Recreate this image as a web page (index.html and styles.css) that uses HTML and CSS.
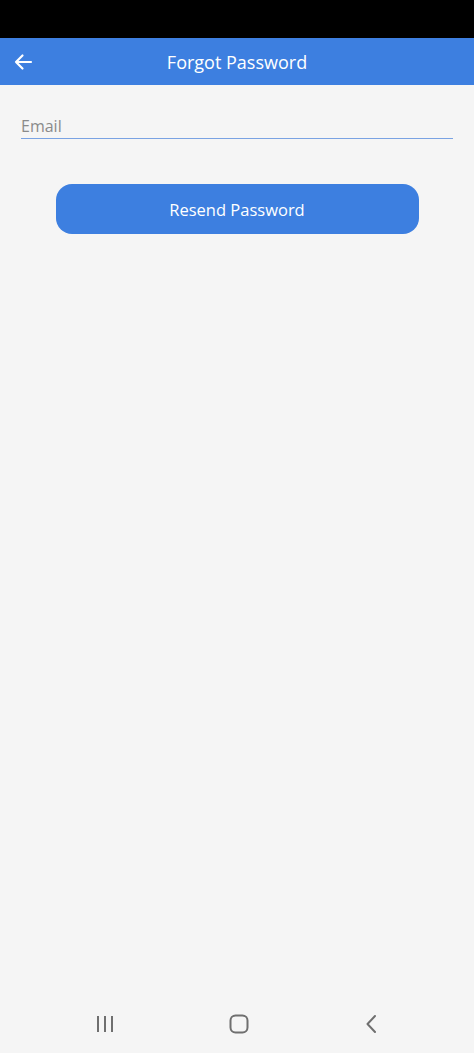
FILE: index.html
```html
<!DOCTYPE html>
<html lang="en">
<head>
  <meta charset="UTF-8" />
  <meta name="viewport" content="width=device-width, initial-scale=1.0"/>
  <title>Forgot Password</title>
  <link rel="stylesheet" href="styles.css">
</head>
<body>
  <div class="status-bar"></div>

  <header class="app-bar">
    <button class="back" aria-label="Back">
      <svg width="24" height="24" viewBox="0 0 24 24">
        <path d="M20 12H5M11.5 5.5L5 12l6.5 6.5" fill="none" stroke="#fff" stroke-width="2.2" stroke-linecap="round" stroke-linejoin="round"/>
      </svg>
    </button>
    <h1>Forgot Password</h1>
  </header>

  <main class="content">
    <label class="field">
      <input type="email" placeholder="Email">
    </label>

    <button class="resend">Resend Password</button>
  </main>

  <nav class="sys-nav">
    <svg width="20" height="20" viewBox="0 0 20 20">
      <path d="M3 2v16M10 2v16M17 2v16" stroke="#6f6f6f" stroke-width="2"/>
    </svg>
    <svg width="20" height="20" viewBox="0 0 20 20">
      <rect x="1.5" y="1.5" width="17" height="17" rx="5" fill="none" stroke="#6f6f6f" stroke-width="2"/>
    </svg>
    <svg width="20" height="20" viewBox="0 0 20 20">
      <path d="M13 2L5.5 10 13 18" fill="none" stroke="#6f6f6f" stroke-width="2" stroke-linecap="round" stroke-linejoin="round"/>
    </svg>
  </nav>
</body>
</html>
```

FILE: styles.css
```css
body {
  margin: 0;
  padding: 0;
  background: #f5f5f5;
  font-family: 'Open Sans', sans-serif;
  height: 1053px;
  display: flex;
  flex-direction: column;
}

.status-bar {
  height: 38px;
  background: #000;
}

.app-bar {
  height: 47px;
  background: #3d7fe0;
  display: flex;
  align-items: center;
  position: relative;
}

.back {
  background: none;
  border: none;
  padding: 0;
  margin-left: 11px;
  display: flex;
  position: relative;
  z-index: 1;
}

.app-bar h1 {
  position: absolute;
  left: 0;
  right: 0;
  margin: 0;
  text-align: center;
  color: #fff;
  font-size: 18px;
  font-weight: 400;
}

.content {
  flex: 1;
  padding: 28px 21px 0;
}

.field {
  display: block;
}

.field input {
  width: 100%;
  box-sizing: border-box;
  border: none;
  border-bottom: 1.5px solid #7aa3e3;
  background: transparent;
  font-family: inherit;
  font-size: 16px;
  padding: 2px 0 1px;
  color: #333;
  outline: none;
}

.field input::placeholder {
  color: #8a8a8a;
}

.resend {
  display: block;
  margin: 45px auto 0;
  width: 363px;
  height: 50px;
  border: none;
  border-radius: 16px;
  background: #3d7fe0;
  color: #fff;
  font-family: inherit;
  font-size: 16.5px;
}

.sys-nav {
  height: 58px;
  display: flex;
  justify-content: space-between;
  align-items: center;
  padding: 0 92px 0 95px;
}
```
